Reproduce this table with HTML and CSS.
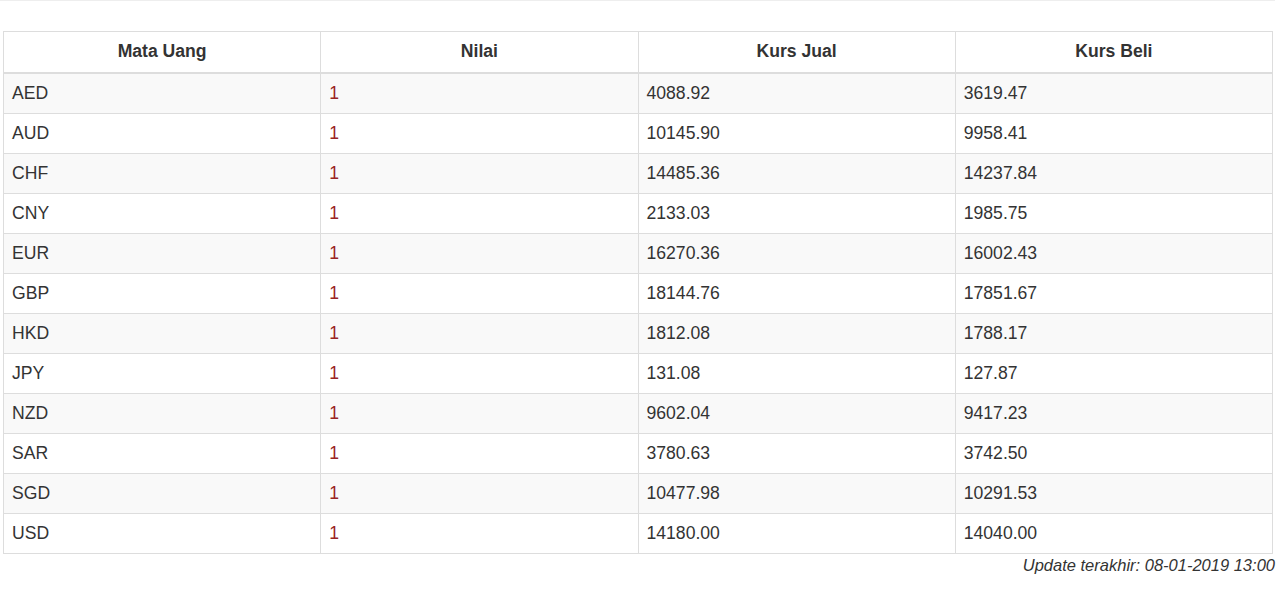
FILE: index.html
```html
<!DOCTYPE html>
<html>
<head>
<meta charset="utf-8">
<link rel="stylesheet" href="styles.css">
</head>
<body>
<div class="page">
  <div class="rule"></div>
  <table class="rates">
    <thead>
      <tr><th>Mata Uang</th><th>Nilai</th><th>Kurs Jual</th><th>Kurs Beli</th></tr>
    </thead>
    <tbody>
      <tr><td>AED</td><td class="val">1</td><td>4088.92</td><td>3619.47</td></tr>
      <tr><td>AUD</td><td class="val">1</td><td>10145.90</td><td>9958.41</td></tr>
      <tr><td>CHF</td><td class="val">1</td><td>14485.36</td><td>14237.84</td></tr>
      <tr><td>CNY</td><td class="val">1</td><td>2133.03</td><td>1985.75</td></tr>
      <tr><td>EUR</td><td class="val">1</td><td>16270.36</td><td>16002.43</td></tr>
      <tr><td>GBP</td><td class="val">1</td><td>18144.76</td><td>17851.67</td></tr>
      <tr><td>HKD</td><td class="val">1</td><td>1812.08</td><td>1788.17</td></tr>
      <tr><td>JPY</td><td class="val">1</td><td>131.08</td><td>127.87</td></tr>
      <tr><td>NZD</td><td class="val">1</td><td>9602.04</td><td>9417.23</td></tr>
      <tr><td>SAR</td><td class="val">1</td><td>3780.63</td><td>3742.50</td></tr>
      <tr><td>SGD</td><td class="val">1</td><td>10477.98</td><td>10291.53</td></tr>
      <tr><td>USD</td><td class="val">1</td><td>14180.00</td><td>14040.00</td></tr>
    </tbody>
  </table>
  <p class="updated">Update terakhir: 08-01-2019 13:00</p>
</div>
</body>
</html>
```

FILE: styles.css
```css
html, body {
  margin: 0;
  padding: 0;
  background: #fff;
}
body {
  font-family: "Liberation Sans", Arial, Helvetica, sans-serif;
  font-size: 16px;
  line-height: 1.42857;
  color: #333;
}
.page {
  width: 1275px;
}
.rule {
  height: 1px;
  background: #eee;
  margin-bottom: 30px;
}
.rates {
  margin-left: 3px;
  width: 1270px;
  border-collapse: collapse;
  border-spacing: 0;
  table-layout: fixed;
  border: 1px solid #ddd;
  font-size: 17.6px;
  line-height: 23px;
}
.rates th,
.rates td {
  border: 1px solid #ddd;
  padding: 8px;
  text-align: left;
  vertical-align: top;
}
.rates th {
  text-align: center;
  font-weight: bold;
  border-bottom: 2px solid #ddd;
  padding-bottom: 9px;
}
.rates tbody tr:nth-child(odd) {
  background: #f9f9f9;
}
.rates td.val {
  color: #9a2424;
}
.updated {
  margin: 0;
  font-size: 16.5px;
  text-align: right;
  font-style: italic;
}
```
